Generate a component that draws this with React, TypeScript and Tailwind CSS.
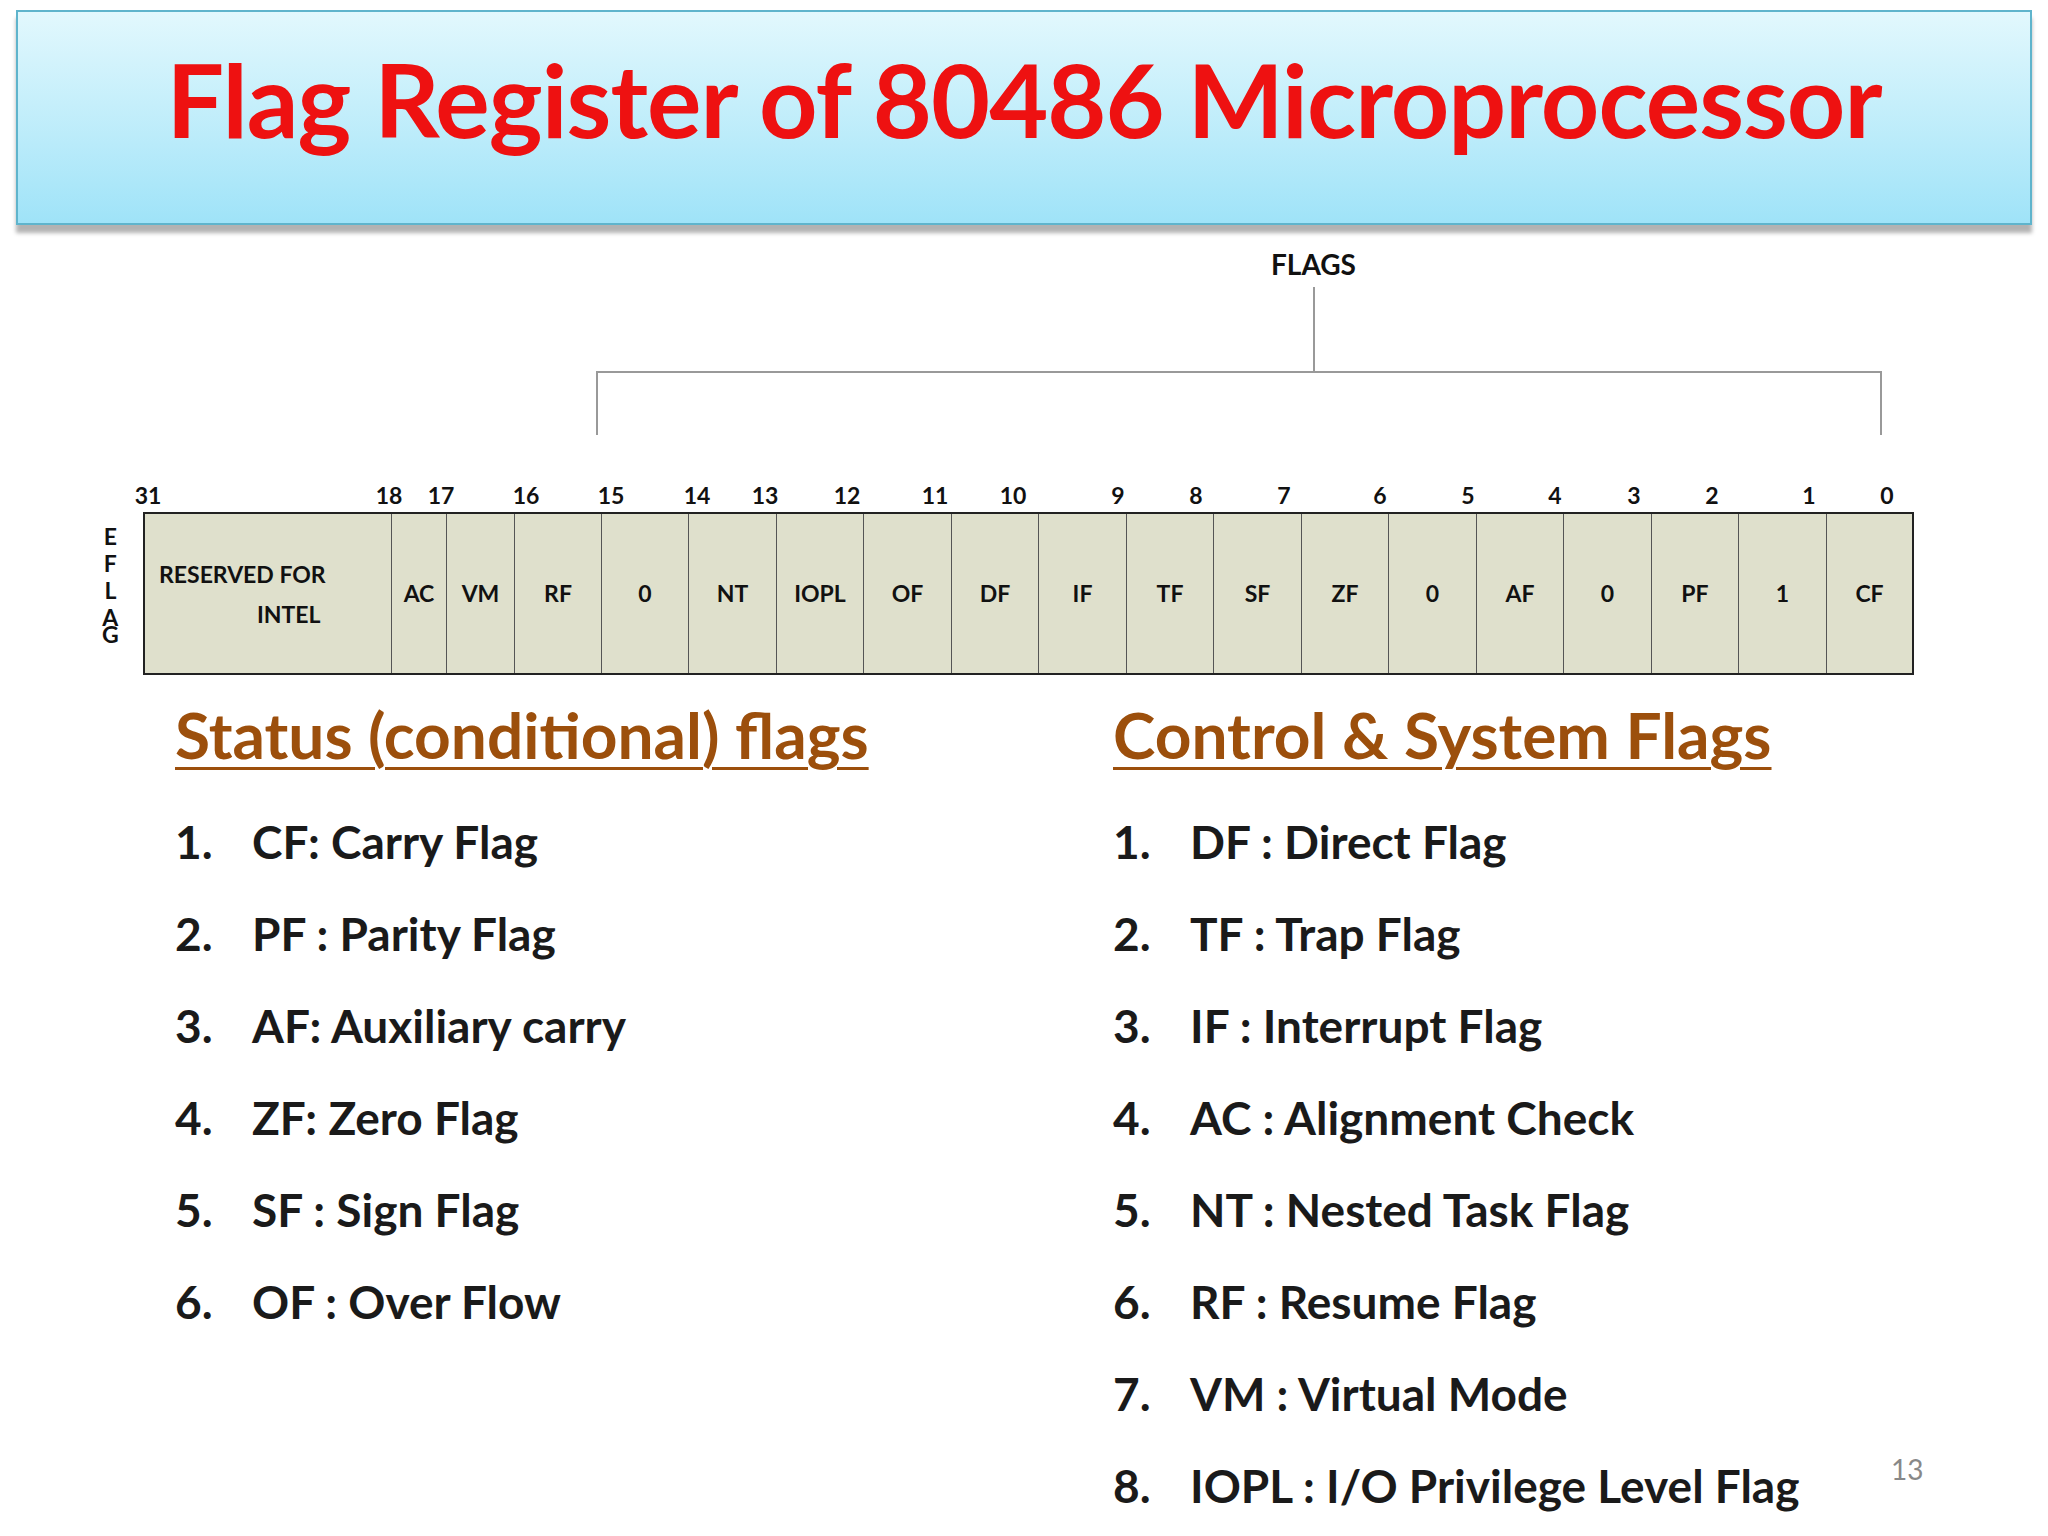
import React from "react";

const cells: [string, number][] = [
  ["", 246], ["AC", 55], ["VM", 68], ["RF", 87], ["0", 87], ["NT", 88], ["IOPL", 87], ["OF", 88], ["DF", 87], ["IF", 88],
  ["TF", 87], ["SF", 88], ["ZF", 87], ["0", 88], ["AF", 87], ["0", 88], ["PF", 87], ["1", 88], ["CF", 86],
];
const bits: [string, number][] = [
  ["31", 148], ["18", 389], ["17", 441], ["16", 526], ["15", 611], ["14", 697], ["13", 765], ["12", 847], ["11", 935], ["10", 1013],
  ["9", 1118], ["8", 1196], ["7", 1284], ["6", 1380], ["5", 1468], ["4", 1555], ["3", 1634], ["2", 1712], ["1", 1809], ["0", 1887],
];
const left = ["CF: Carry Flag", "PF : Parity Flag", "AF: Auxiliary carry", "ZF: Zero Flag", "SF : Sign Flag", "OF : Over Flow"];
const right = ["DF : Direct Flag", "TF : Trap Flag", "IF : Interrupt Flag", "AC : Alignment Check", "NT : Nested Task Flag", "RF : Resume Flag", "VM : Virtual Mode", "IOPL : I/O Privilege Level Flag"];

function List({ title, items }: { title: string; items: string[] }) {
  return (
    <div className="flex flex-col">
      <div className="text-[64px] font-bold text-[#9c4f0c] underline decoration-[3px] underline-offset-[8px] leading-[76px]">{title}</div>
      <div className="mt-[22px] flex flex-col">
        {items.map((t, i) => (
          <div key={i} className="flex h-[92px] items-center text-[46px] font-bold text-[#1a1a1a]">
            <span className="w-[77px]">{i + 1}.</span>
            <span>{t}</span>
          </div>
        ))}
      </div>
    </div>
  );
}

export default function App() {
  return (
    <div className="w-[2048px] h-[1536px] bg-white relative overflow-hidden" style={{ fontFamily: "Lato, 'Open Sans', sans-serif" }}>
      <div className="pt-[10px] px-[16px]">
        <div className="h-[215px] border-2 border-[#5fb4cc] bg-gradient-to-b from-[#e2f8fd] to-[#9fe3f8] shadow-[0_8px_4px_rgba(0,0,0,0.3)] flex items-center justify-center">
          <div className="text-[102px] font-bold text-[#ee1111] leading-none -mt-[38px] tracking-[-1px]">Flag Register of 80486 Microprocessor</div>
        </div>
      </div>
      <div className="relative h-[490px]">
        <div className="absolute left-[1271px] top-[18px] text-[28px] font-bold text-[#111]">FLAGS</div>
        <div className="absolute left-[1313px] top-[62px] w-[2px] h-[84px] bg-[#999]" />
        <div className="absolute left-[596px] top-[146px] w-[1286px] h-[2px] bg-[#999]" />
        <div className="absolute left-[596px] top-[146px] w-[2px] h-[64px] bg-[#999]" />
        <div className="absolute left-[1880px] top-[146px] w-[2px] h-[64px] bg-[#999]" />
        {bits.map(([b, x], i) => (
          <div key={i} className="absolute top-[253px] text-[23px] font-bold text-[#111] -translate-x-1/2" style={{ left: x }}>{b}</div>
        ))}
        <div className="absolute left-[102px] top-[298px] flex flex-col items-center text-[23px] font-bold leading-[27px] text-[#111]">
          {"EFLAG".split("").map((c, i) => <span key={i} className={i === 4 ? "-mt-[10px]" : ""}>{c}</span>)}
        </div>
        <div className="absolute left-[143px] top-[287px] flex h-[163px] border-2 border-[#222] bg-[#dfe0cc]">
          {cells.map(([l, w], i) => (
            <div key={i} className={"flex items-center justify-center text-[23px] font-bold text-[#111] " + (i > 0 ? "border-l border-[#555]" : "")} style={{ width: w }}>
              {i === 0 ? (
                <div className="flex flex-col w-full pl-[14px] leading-[40px]">
                  <span>RESERVED FOR</span>
                  <span className="pl-[98px]">INTEL</span>
                </div>
              ) : l}
            </div>
          ))}
        </div>
      </div>
      <div className="flex pl-[175px] -mt-[18px]">
        <div className="w-[938px]"><List title="Status (conditional) flags" items={left} /></div>
        <List title="Control & System Flags" items={right} />
      </div>
      <div className="absolute left-[1891px] top-[1448px] text-[28px] text-[#888]">13</div>
    </div>
  );
}
